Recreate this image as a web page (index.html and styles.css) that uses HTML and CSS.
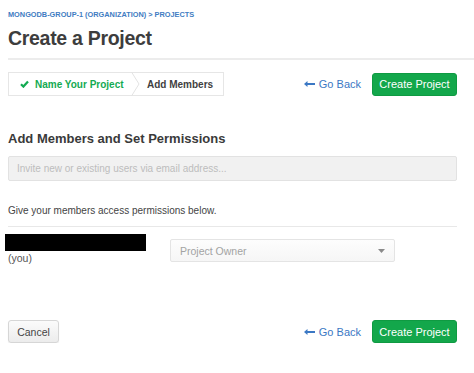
FILE: index.html
```html
<!DOCTYPE html>
<html>
<head>
<meta charset="utf-8">
<link rel="stylesheet" href="styles.css">
</head>
<body>
<div class="page">
  <div class="breadcrumb">MONGODB-GROUP-1 (ORGANIZATION) &gt; PROJECTS</div>
  <h1 class="title">Create a Project</h1>
  <div class="rule"></div>

  <div class="toolbar">
    <div class="stepper">
      <div class="step done">
        <svg class="check" width="9" height="8" viewBox="0 0 9 8"><path d="M1 4.2 L3.4 6.6 L8 1.4" fill="none" stroke="#13aa52" stroke-width="2.2"/></svg>
        <span>Name Your Project</span>
      </div>
      <svg class="chev" width="9" height="24" viewBox="0 0 9 24"><path d="M0.5 0 L8 12 L0.5 24" fill="none" stroke="#e3e3e3" stroke-width="1"/></svg>
      <div class="step current">Add Members</div>
    </div>
    <div class="actions">
      <a class="goback"><svg width="11" height="6" viewBox="0 0 11 6"><path d="M0 3 L3.5 0 L3.5 6 Z" fill="#3b78c4"/><rect x="3" y="2" width="8" height="2" fill="#3b78c4"/></svg>Go Back</a>
      <button class="primary">Create Project</button>
    </div>
  </div>

  <h2 class="section-title">Add Members and Set Permissions</h2>
  <div class="invite">Invite new or existing users via email address...</div>

  <p class="hint">Give your members access permissions below.</p>
  <div class="divider"></div>

  <div class="member">
    <div class="who">
      <div class="redacted"></div>
      <div class="you">(you)</div>
    </div>
    <div class="select">
      <span>Project Owner</span>
      <svg width="7" height="4" viewBox="0 0 7 4"><path d="M0 0 L7 0 L3.5 4 Z" fill="#8a8a8a"/></svg>
    </div>
  </div>

  <div class="footer">
    <button class="cancel">Cancel</button>
    <div class="actions">
      <a class="goback"><svg width="11" height="6" viewBox="0 0 11 6"><path d="M0 3 L3.5 0 L3.5 6 Z" fill="#3b78c4"/><rect x="3" y="2" width="8" height="2" fill="#3b78c4"/></svg>Go Back</a>
      <button class="primary">Create Project</button>
    </div>
  </div>
</div>
</body>
</html>
```
FILE: styles.css
```css
* { box-sizing: border-box; }
html, body { margin: 0; padding: 0; background: #fff; }
body { font-family: "Liberation Sans", Arial, sans-serif; color: #333; }
.page { padding: 10px 17px 0 8px; width: 474px; }

.breadcrumb {
  font-size: 7.35px; font-weight: bold; color: #3f7cc2;
  line-height: 10px; white-space: nowrap;
}
.title {
  margin: 5px 0 0 0; font-size: 19.5px; font-weight: bold; color: #3d3d3d;
  line-height: 26px; letter-spacing: -0.3px;
}
.rule { height: 2px; background: #ececec; margin: 7px -17px 0 0; }

.toolbar { display: flex; justify-content: space-between; align-items: center; margin-top: 12px; }
.stepper {
  display: flex; align-items: center; height: 24px; width: 216px;
  border: 1px solid #e6e6e6; background: #fff;
}
.step { font-size: 10px; font-weight: bold; display: flex; align-items: center; white-space: nowrap; }
.step.done { color: #13aa52; padding-left: 11px; width: 122px; }
.step.done .check { margin-right: 6px; }
.chev { flex: none; }
.step.current { color: #3f3f3f; padding-left: 7px; }

.actions { display: flex; align-items: center; }
.goback {
  color: #3b78c4; font-size: 11px; display: flex; align-items: center;
  margin-right: 11px; white-space: nowrap;
}
.goback svg { margin-right: 4px; }
.primary {
  background: #13a74b; color: #fff; border: 1px solid #0f9a42; border-radius: 3px;
  font-family: inherit; font-size: 11px; height: 23px; width: 85px; padding: 0;
}

.section-title {
  margin: 35px 0 0 0; font-size: 13px; font-weight: bold; color: #3a3a3a;
  line-height: 16px;
}
.invite {
  margin-top: 9px; height: 25px; background: #f1f1f1; border: 1px solid #e2e2e2;
  border-radius: 2px; font-size: 10px; color: #bdbdbd; padding-left: 8px;
  display: flex; align-items: center;
}
.hint { margin: 24px 0 0 0; font-size: 10px; color: #444; line-height: 12px; }
.divider { height: 1px; background: #e8e8e8; margin-top: 9px; }

.member { display: flex; align-items: flex-start; margin-top: 7px; }
.who { width: 165px; margin-left: -3px; }
.redacted { width: 141px; height: 17px; background: #000; }
.you { font-size: 10.5px; color: #555; line-height: 12px; margin-top: 1px; padding-left: 3px; }
.select {
  margin-top: 5px; width: 225px; height: 23px; border: 1px solid #e4e4e4; border-radius: 2px;
  background: linear-gradient(#fdfdfd, #f6f6f6);
  display: flex; align-items: center; justify-content: space-between;
  padding: 0 9px 0 9px; font-size: 10.5px; color: #a3a3a3;
}

.footer { display: flex; justify-content: space-between; align-items: center; margin-top: 56px; }
.cancel {
  width: 51px; height: 23px; border: 1px solid #d6d6d6; border-radius: 3px;
  background: linear-gradient(#fbfbfb, #ececec); font-family: inherit; font-size: 10.5px;
  color: #444; padding: 0; box-shadow: 0 1px 1px rgba(0,0,0,0.08);
}
```
